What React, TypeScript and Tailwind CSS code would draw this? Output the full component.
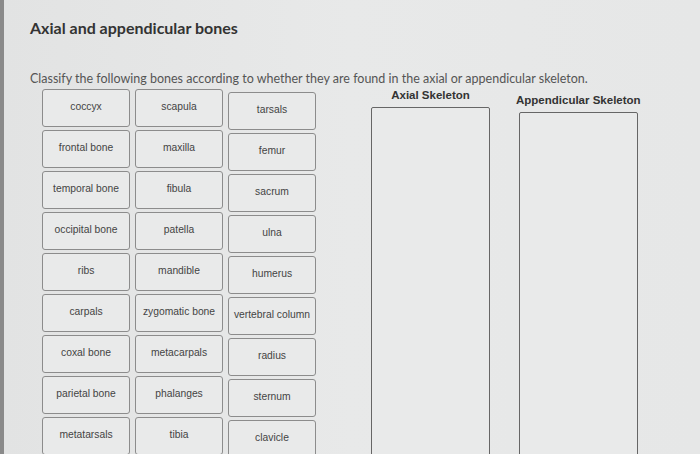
import React from 'react';

const bones = [
  ['coccyx', 'scapula', 'tarsals'],
  ['frontal bone', 'maxilla', 'femur'],
  ['temporal bone', 'fibula', 'sacrum'],
  ['occipital bone', 'patella', 'ulna'],
  ['ribs', 'mandible', 'humerus'],
  ['carpals', 'zygomatic bone', 'vertebral column'],
  ['coxal bone', 'metacarpals', 'radius'],
  ['parietal bone', 'phalanges', 'sternum'],
  ['metatarsals', 'tibia', 'clavicle'],
];

export default function App() {
  return (
    <div className="relative w-[700px] h-[454px] overflow-hidden bg-gradient-to-r from-[#e2e3e3] via-[#e8e9e9] to-[#e6e7e7] font-['Liberation_Sans',Arial,sans-serif]">
      {/* monitor edge */}
      <div className="absolute left-0 top-0 h-full w-[4px] bg-[#8a8a8a]" />

      <div className="pl-[30px] pt-[18px]">
        <h1 className="font-['Lato',sans-serif] text-[16px] font-bold text-[#333] leading-[20px]">
          Axial and appendicular bones
        </h1>
        <p className="mt-[33px] font-['Lato',sans-serif] text-[12.5px] text-[#555] leading-[16px]">
          Classify the following bones according to whether they are found in the axial or appendicular skeleton.
        </p>
      </div>

      <div className="flex items-start">
        {/* Bone cards */}
        <div className="ml-[42px] mt-[2px] grid grid-cols-[88px_88px_88px] auto-rows-[38px] gap-x-[5px] gap-y-[3px]">
          {bones.flat().map((b, i) => (
            <div
              key={b}
              className={`h-[38px] flex items-center justify-center pb-[2px] rounded-[3px] border border-[#8c8c8c] bg-[#e9eaea] text-[10.3px] text-[#444] ${
                i % 3 === 2 ? 'translate-y-[3px]' : ''
              }`}
            >
              {b}
            </div>
          ))}
        </div>

        {/* Drop zones */}
        <div className="ml-[55px] flex gap-[26px]">
          <div className="flex flex-col items-center">
            <div className="text-[11.5px] font-bold text-[#333] leading-[14px] mt-[1px]">Axial Skeleton</div>
            <div className="mt-[5px] w-[119px] h-[400px] rounded-[2px] border border-[#666] bg-[#e9eaea]" />
          </div>
          <div className="flex flex-col items-center mt-[5px]">
            <div className="text-[11.5px] font-bold text-[#333] leading-[14px] mt-[1px]">Appendicular Skeleton</div>
            <div className="mt-[5px] w-[119px] h-[400px] rounded-[2px] border border-[#666] bg-[#e9eaea]" />
          </div>
        </div>
      </div>
    </div>
  );
}
